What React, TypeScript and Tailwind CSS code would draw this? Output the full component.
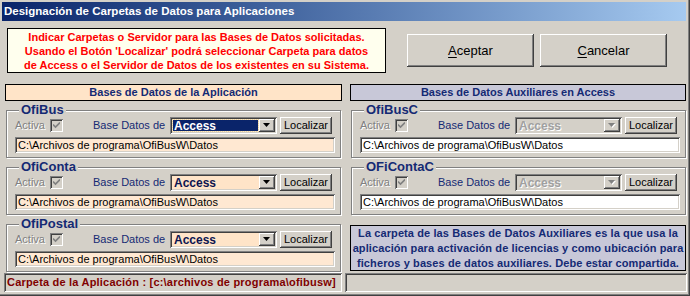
import React from 'react';

const raised =
  'shadow-[inset_-1px_-1px_#404040,inset_1px_1px_#ffffff,inset_-2px_-2px_#808080,inset_2px_2px_#d4d0c8]';
const sunken =
  'shadow-[inset_1px_1px_#808080,inset_-1px_-1px_#ffffff,inset_2px_2px_#404040,inset_-2px_-2px_#d4d0c8]';

const RUTA = 'C:\\Archivos de programa\\OfiBusW\\Datos';

type Variante = 'foco' | 'normal' | 'aux';

const Flecha = ({ gris }: { gris?: boolean }) => (
  <svg width="8" height="5" viewBox="0 0 8 5">
    {gris && <polygon points="1,1 8,1 4.5,5" fill="#ffffff" />}
    <polygon points="0,0 7,0 3.5,4" fill={gris ? '#808080' : '#000000'} />
  </svg>
);

const Casilla = () => (
  <div className={`w-[13px] h-[13px] bg-[#d4d0c8] flex items-center justify-center ${sunken}`}>
    <svg width="7" height="7" viewBox="0 0 7 7">
      <path d="M0 2.5 L2.5 5 L7 0.5" stroke="#808080" strokeWidth="1.6" fill="none" />
    </svg>
  </div>
);

const Desplegable = ({ variante }: { variante: Variante }) => {
  const aux = variante === 'aux';
  const fondo = aux ? 'bg-[#d4d0c8]' : 'bg-[#ffe4c8]';
  return (
    <div className={`w-[107px] h-[17px] p-[2px] flex ${fondo} ${sunken}`}>
      <div className="flex-1 flex items-center p-[1px]">
        {variante === 'foco' ? (
          <div className="flex-1 h-full flex items-center bg-[#0a246a] outline-1 outline-dotted outline-[#e8d8a0] pl-[1px] text-white font-bold text-[12px] leading-none">
            Access
          </div>
        ) : (
          <div
            className={`flex-1 h-full flex items-center pl-[1px] font-bold text-[12px] leading-none ${
              aux ? 'text-[#a0a0a0] [text-shadow:1px_1px_#ffffff]' : 'text-[#0c1450]'
            }`}
          >
            Access
          </div>
        )}
      </div>
      <div className={`w-[16px] h-full flex items-center justify-center bg-[#d4d0c8] ${raised}`}>
        <Flecha gris={aux} />
      </div>
    </div>
  );
};

const Grupo = ({ nombre, variante }: { nombre: string; variante: Variante }) => {
  const aux = variante === 'aux';
  return (
    <fieldset className="border border-[#808080] shadow-[inset_1px_1px_#ffffff,1px_1px_#ffffff] pl-[8px] pr-[5px] pb-[4px]">
      <legend className="ml-[4px] px-[2px] bg-[#d4d0c8] text-[13px] leading-[14px] font-bold text-[#142a74]">
        {nombre}
      </legend>
      <div className="flex items-center h-[17px]">
        <span className="w-[35px] text-[11px] text-[#808080] [text-shadow:1px_1px_#ffffff]">Activa</span>
        <Casilla />
        <span className="ml-[30px] w-[77px] text-[11px] text-[#142a74]">Base Datos de</span>
        <Desplegable variante={variante} />
        <button
          className={`ml-[3px] w-[52px] h-[17px] bg-[#d4d0c8] text-[11px] text-black flex items-center justify-center ${raised}`}
        >
          Localizar
        </button>
      </div>
      <div
        className={`mt-[3px] h-[16px] w-[320px] flex items-center pl-[3px] text-[11px] text-black ${
          aux ? 'bg-white' : 'bg-[#ffe8d2]'
        } ${sunken}`}
      >
        {RUTA}
      </div>
    </fieldset>
  );
};

const BotonGrande = ({ inicial, resto }: { inicial: string; resto: string }) => (
  <button
    className={`w-[127px] h-[33px] bg-[#d4d0c8] text-[13px] text-black flex items-center justify-center ${raised}`}
  >
    <span className="underline underline-offset-2">{inicial}</span>
    {resto}
  </button>
);

export default function App() {
  return (
    <div className="w-[690px] h-[296px] flex flex-col overflow-hidden bg-[#d4d0c8] font-['Liberation_Sans',Arial,sans-serif] shadow-[inset_-1px_-1px_#404040,inset_-2px_-2px_#808080]">
      <div className="mt-[2px] ml-[2px] mr-[4px] h-[19px] flex items-center pl-[2px] bg-gradient-to-r from-[#0a246a] to-[#a6caf0] text-white font-bold text-[11.5px]">
        Designación de Carpetas de Datos para Aplicaciones
      </div>

      <div className="flex mt-[7px] h-[45px]">
        <div className="ml-[7px] w-[379px] border border-black bg-[#ffffee] flex flex-col items-center justify-center text-[#ff0000] font-bold text-[11px] leading-[14px]">
          <span>Indicar Carpetas o Servidor para las Bases de Datos solicitadas.</span>
          <span>Usando el Botón 'Localizar' podrá seleccionar Carpeta para datos</span>
          <span>de Access o el Servidor de Datos de los existentes en su Sistema.</span>
        </div>
        <div className="flex gap-[6px] ml-[21px] mt-[6px]">
          <BotonGrande inicial="A" resto="ceptar" />
          <BotonGrande inicial="C" resto="ancelar" />
        </div>
      </div>

      <div className="flex-1 grid grid-cols-[338px_342px] gap-[3px] pl-[4px] mt-[11px] pb-[4px]">
        <div className="flex flex-col">
          <div className="ml-[1px] w-[337px] h-[17px] border border-black bg-[#ffe4c8] flex items-center justify-center text-[11px] font-bold text-[#142a74]">
            Bases de Datos de la Aplicación
          </div>
          <div className="ml-[2px] w-[334px] flex flex-col gap-[2px] mt-[2px]">
            <Grupo nombre="OfiBus" variante="foco" />
            <Grupo nombre="OfiConta" variante="normal" />
            <Grupo nombre="OfiPostal" variante="normal" />
          </div>
          <div
            className={`mt-auto h-[19px] flex items-center pl-[3px] whitespace-nowrap overflow-hidden text-[11px] tracking-[0.2px] font-bold text-[#800000] ${sunken}`}
          >
            Carpeta de la Aplicación : [c:\archivos de programa\ofibusw]
          </div>
        </div>

        <div className="flex flex-col">
          <div className="ml-[5px] w-[336px] h-[17px] border border-black bg-[#c8c8d8] flex items-center justify-center text-[11px] font-bold text-[#142a74]">
            Bases de Datos Auxiliares en Access
          </div>
          <div className="ml-[6px] w-[335px] flex flex-col gap-[2px] mt-[2px]">
            <Grupo nombre="OfiBusC" variante="aux" />
            <Grupo nombre="OFiContaC" variante="aux" />
          </div>
          <div className="ml-[5px] w-[336px] h-[46px] mt-[10px] border border-black bg-[#c8c8d8] flex flex-col items-center justify-center whitespace-nowrap text-[11px] tracking-[0.1px] leading-[15px] font-bold text-[#142a74]">
            <span>La carpeta de las Bases de Datos Auxiliares es la que usa la</span>
            <span>aplicación para activación de licencias y como ubicación para</span>
            <span>ficheros y bases de datos auxiliares. Debe estar compartida.</span>
          </div>
          <div className={`mt-auto h-[19px] ${sunken}`} />
        </div>
      </div>
    </div>
  );
}
